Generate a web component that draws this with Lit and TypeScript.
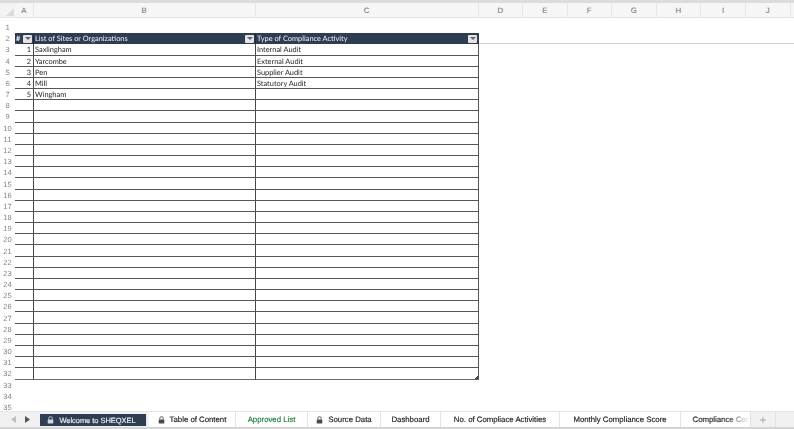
import { LitElement, html, css } from "lit";
import { customElement } from "lit/decorators.js";

const COLS: [string, number][] = [
  ["A", 18.5], ["B", 222], ["C", 223], ["D", 44.5], ["E", 44.5], ["F", 44.5],
  ["G", 44.5], ["H", 44.5], ["I", 45], ["J", 44.5], ["", 40],
];
const SITES = ["Saxlingham", "Yarcombe", "Pen", "Mill", "Wingham"];
const TYPES = ["Internal Audit", "External Audit", "Supplier Audit", "Statutory Audit"];
const TABS: { label: string; w: number; lock?: boolean; cls?: string }[] = [
  { label: "Welcome to SHEQXEL", w: 107, lock: true, cls: "dark" },
  { label: "Table of Content", w: 87, lock: true },
  { label: "Approved List", w: 72, cls: "active" },
  { label: "Source Data", w: 73, lock: true },
  { label: "Dashboard", w: 60 },
  { label: "No. of Compliace Activities", w: 119 },
  { label: "Monthly Compliance Score", w: 121 },
];

const lock = html`<svg class="lock" viewBox="0 0 8 9" aria-hidden="true">
  <path d="M2 4V2.7a2 2 0 0 1 4 0V4" fill="none" stroke="currentColor" stroke-width="1"/>
  <rect x="0.8" y="4" width="6.4" height="4.4" rx="0.5" fill="currentColor"/>
</svg>`;

@customElement("app-root")
export class AppRoot extends LitElement {
  static styles = css`
    :host { display: block; width: 794px; height: 429px; overflow: hidden; background: #fff; }
    .app { display: flex; flex-direction: column; width: 794px; height: 429px; overflow: hidden; font-family: "Liberation Sans", Arial, sans-serif; filter: blur(0.3px); text-rendering: geometricPrecision; -webkit-font-smoothing: antialiased; }
    .topline { height: 3px; flex: none; background: #dcdcdc; }
    .colhead { height: 14px; flex: none; display: flex; background: #f6f6f6; border-bottom: 1px solid #e2e2e2; box-sizing: content-box; }
    .corner { width: 15px; flex: none; position: relative; background: #f3f3f3; }
    .corner::after { content: ""; position: absolute; right: 1px; bottom: 1px; border-style: solid; border-width: 0 0 8px 8px; border-color: transparent transparent #dcdcdc transparent; }
    .colhead .c { flex: none; display: flex; align-items: center; justify-content: center; font-size: 7.8px; color: #6e6e6e; border-right: 1px solid #e6e6e6; box-sizing: border-box; }
    .sheet { flex: 1; min-height: 0; overflow: hidden; }
    .row { display: flex; height: 11.18px; }
    .row.first { height: 15.2px; }
    .label { width: 15px; flex: none; display: flex; align-items: center; justify-content: center; font-size: 7.5px; color: #858585; background: #fff; }
    .first .label { padding-top: 4px; box-sizing: border-box; }
    .cell { flex: none; box-sizing: border-box; font-family: Lato, "Open Sans", sans-serif; font-size: 7.4px; line-height: 11.5px; color: #262626; white-space: nowrap; padding-left: 1.5px; overflow: hidden; }
    .a { width: 18.5px; }
    .b { width: 222px; }
    .cc { width: 223px; }
    .grid .cell { border-bottom: 1px solid #565656; border-right: 1px solid #484848; }
    .grid .num { text-align: right; padding: 0 1.5px 0 0; }
    .grid .cc { position: relative; border-right: 1.5px solid #555; }
    .last .cell { border-bottom: 1.5px solid #6a6a6a; }
    .handle { position: absolute; right: 0; bottom: 0; width: 3px; height: 3px; background: linear-gradient(135deg, transparent 50%, #2c4a78 50%); }
    .hdr .cell { background: #2f3d52; color: #eef0f3; display: flex; align-items: center; justify-content: space-between; padding: 0 0 0 1.5px; border-right: 1px solid #1f2a3a; }
    .hdr .a { padding-left: 1px; font-weight: 700; }
    .hdr .cc { border-right: 1.5px solid #2f3d52; }
    .hdr .rest { flex: 1; border-bottom: 1px solid #cfcfcf; }
    .filter { width: 9px; height: 8px; flex: none; margin-right: 0.5px; background: #e4e4e4; display: flex; align-items: center; justify-content: center; border-radius: 1px; }
    .filter::before { content: ""; border-style: solid; border-width: 3px 3px 0 3px; border-color: #666 transparent transparent transparent; }
    .tabs { height: 18px; flex: none; display: flex; align-items: stretch; background: #f1f1f1; border-top: 1px solid #e4e4e4; border-bottom: 2px solid #d4d4d4; box-sizing: border-box; font-size: 7.8px; color: #1c1c1c; white-space: nowrap; }
    .nav { width: 40px; flex: none; display: flex; align-items: center; gap: 9px; padding-left: 11px; box-sizing: border-box; }
    .nav svg { width: 5px; height: 7px; }
    .nav .off { color: #bdbdbd; }
    .nav .on { color: #555; }
    .tab { flex: none; display: flex; align-items: center; justify-content: center; gap: 5px; background: #fff; border-right: 1px solid #e2e2e2; box-sizing: border-box; -webkit-text-stroke: 0.15px currentColor; }
    .tab.dark { background: #2f3d52; color: #f2f3f5; margin: 2px 2px 1px 0; font-size: 7.5px; letter-spacing: -0.05px; padding-right: 3px; }
    .tab.active { color: #1e7d45; }
    .tab.cut { width: 70px; justify-content: flex-start; padding-left: 11.5px; position: relative; }
    .tab.cut::after { content: ""; position: absolute; right: 0; top: 0; bottom: 0; width: 24px; background: linear-gradient(90deg, rgba(255,255,255,0), #fff); }
    .plus { width: 25px; flex: none; display: flex; align-items: center; justify-content: center; border-right: 1px solid #e2e2e2; color: #a8a8a8; box-sizing: border-box; font-size: 12px; }
    .lock { width: 7px; height: 8px; flex: none; color: #4a4a4a; }
    .dark .lock { color: #d5d8dd; }
  `;

  private rowLabel(n: number) {
    return html`<div class="label">${n}</div>`;
  }

  render() {
    const body = [];
    for (let n = 1; n <= 35; n++) {
      if (n === 1 || n > 32) {
        body.push(html`<div class="row ${n === 1 ? "first" : ""}">${this.rowLabel(n)}</div>`);
      } else if (n === 2) {
        body.push(html`<div class="row hdr">
          ${this.rowLabel(n)}
          <div class="cell a"><span>#</span><span class="filter"></span></div>
          <div class="cell b"><span>List of Sites or Organizations</span><span class="filter"></span></div>
          <div class="cell cc"><span>Type of Compliance Activity</span><span class="filter"></span></div>
          <div class="rest"></div>
        </div>`);
      } else {
        const i = n - 3;
        body.push(html`<div class="row grid ${n === 32 ? "last" : ""}">
          ${this.rowLabel(n)}
          <div class="cell a num">${i < SITES.length ? i + 1 : ""}</div>
          <div class="cell b">${SITES[i] ?? ""}</div>
          <div class="cell cc">${TYPES[i] ?? ""}${n === 32 ? html`<span class="handle"></span>` : ""}</div>
        </div>`);
      }
    }
    return html`<div class="app">
      <div class="topline"></div>
      <div class="colhead">
        <div class="corner"></div>
        ${COLS.map(([l, w]) => html`<div class="c" style="width:${w}px">${l}</div>`)}
      </div>
      <div class="sheet">${body}</div>
      <div class="tabs">
        <div class="nav">
          <svg class="off" viewBox="0 0 5 7"><path d="M5 0V7L0 3.5Z" fill="currentColor"/></svg>
          <svg class="on" viewBox="0 0 5 7"><path d="M0 0V7L5 3.5Z" fill="currentColor"/></svg>
        </div>
        ${TABS.map((t) => html`<div class="tab ${t.cls ?? ""}" style="width:${t.w}px">${t.lock ? lock : ""}<span>${t.label}</span></div>`)}
        <div class="tab cut">Compliance Con</div>
        <div class="plus">+</div>
      </div>
    </div>`;
  }
}
